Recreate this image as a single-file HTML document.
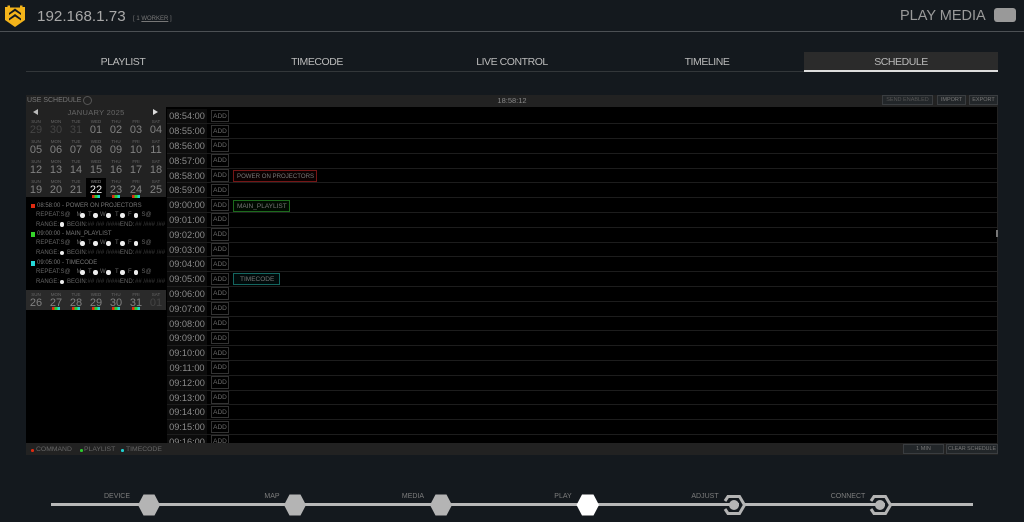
<!DOCTYPE html>
<html><head><meta charset="utf-8"><style>
html,body{margin:0;padding:0;width:1024px;height:522px;overflow:hidden;background:#14191e;font-family:"Liberation Sans",sans-serif;color:#999}
.a{position:absolute;white-space:nowrap;line-height:1}
.c{transform:translateX(-50%)}
.tab{position:absolute;top:56.5px;font-size:10.5px;letter-spacing:-.45px;color:#bbb;line-height:11px;transform:translateX(-50%)}
.btn{position:absolute;box-sizing:border-box;border:1px solid #3a3d40;background:#222629;color:#777;font-size:5.5px;text-align:center;line-height:8.5px}
.d{position:absolute;width:20px;text-align:center;color:#777}
.d b{display:block;font-weight:normal;font-size:4.5px;line-height:5px;color:#666}
.d i{display:block;font-style:normal;font-size:11px;line-height:11px;color:#808080;margin-top:1px}
.row{height:14.81px;position:relative;box-sizing:border-box;border-bottom:1px solid #1d1d1d}
.row s{text-decoration:none;position:absolute;left:0;top:0;width:40px;height:13.8px;background:#0c0c0c;color:#8a8a8a;font-size:9.2px;line-height:15px;text-align:center}
.row u{text-decoration:none;position:absolute;left:44px;top:.5px;width:16px;height:10.5px;border:1px solid #333;color:#6c6c6c;font-size:6.5px;line-height:11px;text-align:center;background:#000}
.ev{position:absolute;box-sizing:border-box;left:233px;height:12px;font-size:6.5px;line-height:11.5px;color:#777;padding-left:3px;white-space:nowrap}
.t{font-size:6px;color:#777;left:37px}
.s{font-size:6px;color:#666}
.k{font-size:6px;color:#3f3f3f}
.sq{position:absolute;width:4.5px;height:4.5px;left:30.5px}
.dots{position:absolute;height:3px;width:8px;background:linear-gradient(90deg,#e02a10 0 33%,#2ecb2e 33% 66%,#1fd0d0 66%)}
.w{position:absolute;width:4.5px;height:4.5px;border-radius:50%;background:#eee}
.lb{position:absolute;top:492.5px;font-size:7px;color:#7d7d7d;line-height:8px;transform:translateX(-50%)}
</style></head><body>
<svg class="a" style="left:4px;top:4px" width="22" height="24" viewBox="0 0 22 24"><path d="M1 4V3H3.500V1.500H6V3.500H16V1.500H18.500V3H21V16L11 23L1 16Z" fill="#f4b41a"/><path d="M5 9L11 4.500L17 9V11L11 7L5 11ZM5 14.500L11 10L17 14.500V16.500L11 12.500L5 16.500Z" fill="#14191e"/></svg>
<div class="a" style="left:37px;top:9px;font-size:15.200px;color:#a8a8a8">192.168.1.73</div>
<div class="a" style="left:133px;top:16px;font-size:6px;color:#777">[ 1 <span style="text-decoration:underline">WORKER</span> ]</div>
<div class="a" style="left:900px;top:8.500px;font-size:14.500px;color:#9a9a9a">PLAY MEDIA</div>
<div class="a" style="left:994px;top:8px;width:22px;height:14px;background:#999;border-radius:3px"></div>
<div class="a" style="left:0;top:31px;width:1024px;height:1px;background:#4c5054"></div>

<div class="a" style="left:804px;top:52px;width:194px;height:18px;background:#2b2b2b"></div>
<div class="a" style="left:26px;top:71px;width:972px;height:1px;background:#33373a"></div>
<div class="a" style="left:804px;top:70px;width:194px;height:1.500px;background:#ddd"></div>
<div class="tab" style="left:123px">PLAYLIST</div>
<div class="tab" style="left:317px">TIMECODE</div>
<div class="tab" style="left:512px">LIVE CONTROL</div>
<div class="tab" style="left:707px">TIMELINE</div>
<div class="tab" style="left:901px">SCHEDULE</div>

<div class="a" style="left:26px;top:95px;width:972px;height:360px;background:#222"></div>
<div class="a" style="left:26px;top:197px;width:140px;height:246px;background:#000"></div>
<div class="a" style="left:166px;top:107px;width:830.500px;height:336px;background:#000"></div>

<div class="a" style="left:27px;top:96.500px;font-size:7px;color:#777">USE SCHEDULE</div>
<div class="a" style="left:82.500px;top:96px;width:7px;height:7px;border:1px solid #555;border-radius:50%"></div>
<div class="a c" style="left:512px;top:96.500px;font-size:7.500px;color:#888">18:58:12</div>
<div class="btn" style="left:882px;top:95px;width:51px;height:10px;color:#555">SEND ENABLED</div>
<div class="btn" style="left:937px;top:95px;width:29px;height:10px">IMPORT</div>
<div class="btn" style="left:969px;top:95px;width:29px;height:10px">EXPORT</div>

<div class="a" style="left:33px;top:109px;width:0;height:0;border:3px solid transparent;border-right:5px solid #bbb;border-left:0"></div>
<div class="a" style="left:153px;top:109px;width:0;height:0;border:3px solid transparent;border-left:5px solid #ddd;border-right:0"></div>
<div class="a c" style="left:96px;top:108.500px;font-size:7.500px;color:#666;letter-spacing:.3px">JANUARY 2025</div>

<div class="d" style="left:26px;top:119px"><b>SUN</b><i style="color:#444">29</i></div>
<div class="d" style="left:46px;top:119px"><b>MON</b><i style="color:#444">30</i></div>
<div class="d" style="left:66px;top:119px"><b>TUE</b><i style="color:#444">31</i></div>
<div class="d" style="left:86px;top:119px"><b>WED</b><i>01</i></div>
<div class="d" style="left:106px;top:119px"><b>THU</b><i>02</i></div>
<div class="d" style="left:126px;top:119px"><b>FRI</b><i>03</i></div>
<div class="d" style="left:146px;top:119px"><b>SAT</b><i>04</i></div>

<div class="d" style="left:26px;top:139px"><b>SUN</b><i>05</i></div>
<div class="d" style="left:46px;top:139px"><b>MON</b><i>06</i></div>
<div class="d" style="left:66px;top:139px"><b>TUE</b><i>07</i></div>
<div class="d" style="left:86px;top:139px"><b>WED</b><i>08</i></div>
<div class="d" style="left:106px;top:139px"><b>THU</b><i>09</i></div>
<div class="d" style="left:126px;top:139px"><b>FRI</b><i>10</i></div>
<div class="d" style="left:146px;top:139px"><b>SAT</b><i>11</i></div>

<div class="d" style="left:26px;top:159px"><b>SUN</b><i>12</i></div>
<div class="d" style="left:46px;top:159px"><b>MON</b><i>13</i></div>
<div class="d" style="left:66px;top:159px"><b>TUE</b><i>14</i></div>
<div class="d" style="left:86px;top:159px"><b>WED</b><i>15</i></div>
<div class="d" style="left:106px;top:159px"><b>THU</b><i>16</i></div>
<div class="d" style="left:126px;top:159px"><b>FRI</b><i>17</i></div>
<div class="d" style="left:146px;top:159px"><b>SAT</b><i>18</i></div>

<div class="a" style="left:86px;top:178px;width:20px;height:20px;background:#000"></div>
<div class="d" style="left:26px;top:179px"><b>SUN</b><i>19</i></div>
<div class="d" style="left:46px;top:179px"><b>MON</b><i>20</i></div>
<div class="d" style="left:66px;top:179px"><b>TUE</b><i>21</i></div>
<div class="d" style="left:86px;top:179px"><b style="color:#888">WED</b><i style="color:#eee">22</i></div>
<div class="d" style="left:106px;top:179px"><b>THU</b><i>23</i></div>
<div class="d" style="left:126px;top:179px"><b>FRI</b><i>24</i></div>
<div class="d" style="left:146px;top:179px"><b>SAT</b><i>25</i></div>
<div class="dots" style="left:92px;top:195px"></div>
<div class="dots" style="left:112px;top:195px"></div>
<div class="dots" style="left:132px;top:195px"></div>

<div class="sq" style="top:203.500px;background:#e02a10"></div>
<div class="a t" style="top:202.700px">08:58:00 - POWER ON PROJECTORS</div>
<div class="a s" style="left:36px;top:212px">REPEAT:</div><div class="a s" style="left:60.500px;top:212px">S@</div><div class="a s" style="left:76.500px;top:212px">M</div><div class="w" style="left:80px;top:213px"></div><div class="a s" style="left:88px;top:212px">T</div><div class="w" style="left:93px;top:213px"></div><div class="a s" style="left:100px;top:212px">W</div><div class="w" style="left:106px;top:213px"></div><div class="a s" style="left:115px;top:212px">T</div><div class="w" style="left:120px;top:213px"></div><div class="a s" style="left:128px;top:212px">F</div><div class="w" style="left:133.500px;top:213px"></div><div class="a s" style="left:141.500px;top:212px">S@</div>
<div class="a s" style="left:36px;top:221.500px">RANGE:</div><div class="w" style="left:59.500px;top:222px"></div><div class="a s" style="left:67px;top:221.500px">BEGIN:</div><div class="a k" style="left:87.500px;top:221.500px">## /## /####</div><div class="a s" style="left:120px;top:221.500px">END:</div><div class="a k" style="left:135px;top:221.500px">## /### /##</div>

<div class="sq" style="top:232.300px;background:#35d52a"></div>
<div class="a t" style="top:231.300px">09:00:00 - MAIN_PLAYLIST</div>
<div class="a s" style="left:36px;top:240px">REPEAT:</div><div class="a s" style="left:60.500px;top:240px">S@</div><div class="a s" style="left:76.500px;top:240px">M</div><div class="w" style="left:80px;top:241px"></div><div class="a s" style="left:88px;top:240px">T</div><div class="w" style="left:93px;top:241px"></div><div class="a s" style="left:100px;top:240px">W</div><div class="w" style="left:106px;top:241px"></div><div class="a s" style="left:115px;top:240px">T</div><div class="w" style="left:120px;top:241px"></div><div class="a s" style="left:128px;top:240px">F</div><div class="w" style="left:133.500px;top:241px"></div><div class="a s" style="left:141.500px;top:240px">S@</div>
<div class="a s" style="left:36px;top:249.700px">RANGE:</div><div class="w" style="left:59.500px;top:250.500px"></div><div class="a s" style="left:67px;top:249.700px">BEGIN:</div><div class="a k" style="left:87.500px;top:249.700px">## /## /####</div><div class="a s" style="left:120px;top:249.700px">END:</div><div class="a k" style="left:135px;top:249.700px">## /### /##</div>

<div class="sq" style="top:261px;background:#25d8d8"></div>
<div class="a t" style="top:260.300px">09:05:00 - TIMECODE</div>
<div class="a s" style="left:36px;top:269.300px">REPEAT:</div><div class="a s" style="left:60.500px;top:269.300px">S@</div><div class="a s" style="left:76.500px;top:269.300px">M</div><div class="w" style="left:80px;top:270px"></div><div class="a s" style="left:88px;top:269.300px">T</div><div class="w" style="left:93px;top:270px"></div><div class="a s" style="left:100px;top:269.300px">W</div><div class="w" style="left:106px;top:270px"></div><div class="a s" style="left:115px;top:269.300px">T</div><div class="w" style="left:120px;top:270px"></div><div class="a s" style="left:128px;top:269.300px">F</div><div class="w" style="left:133.500px;top:270px"></div><div class="a s" style="left:141.500px;top:269.300px">S@</div>
<div class="a s" style="left:36px;top:278.700px">RANGE:</div><div class="w" style="left:59.500px;top:279.500px"></div><div class="a s" style="left:67px;top:278.700px">BEGIN:</div><div class="a k" style="left:87.500px;top:278.700px">## /## /####</div><div class="a s" style="left:120px;top:278.700px">END:</div><div class="a k" style="left:135px;top:278.700px">## /### /##</div>

<div class="a" style="left:26px;top:290px;width:140px;height:20px;background:#2a2a2a"></div>
<div class="d" style="left:26px;top:291.500px"><b>SUN</b><i>26</i></div>
<div class="d" style="left:46px;top:291.500px"><b>MON</b><i>27</i></div>
<div class="d" style="left:66px;top:291.500px"><b>TUE</b><i>28</i></div>
<div class="d" style="left:86px;top:291.500px"><b>WED</b><i>29</i></div>
<div class="d" style="left:106px;top:291.500px"><b>THU</b><i>30</i></div>
<div class="d" style="left:126px;top:291.500px"><b>FRI</b><i>31</i></div>
<div class="d" style="left:146px;top:291.500px"><b>SAT</b><i style="color:#444">01</i></div>
<div class="dots" style="left:52px;top:307px"></div>
<div class="dots" style="left:72px;top:307px"></div>
<div class="dots" style="left:92px;top:307px"></div>
<div class="dots" style="left:112px;top:307px"></div>
<div class="dots" style="left:132px;top:307px"></div>

<div class="a" style="left:167px;top:109.400px;width:829.500px;height:333.600px;overflow:hidden;white-space:normal">
<div class="row"><s>08:54:00</s><u>ADD</u></div>
<div class="row"><s>08:55:00</s><u>ADD</u></div>
<div class="row"><s>08:56:00</s><u>ADD</u></div>
<div class="row"><s>08:57:00</s><u>ADD</u></div>
<div class="row"><s>08:58:00</s><u>ADD</u></div>
<div class="row"><s>08:59:00</s><u>ADD</u></div>
<div class="row"><s>09:00:00</s><u>ADD</u></div>
<div class="row"><s>09:01:00</s><u>ADD</u></div>
<div class="row"><s>09:02:00</s><u>ADD</u></div>
<div class="row"><s>09:03:00</s><u>ADD</u></div>
<div class="row"><s>09:04:00</s><u>ADD</u></div>
<div class="row"><s>09:05:00</s><u>ADD</u></div>
<div class="row"><s>09:06:00</s><u>ADD</u></div>
<div class="row"><s>09:07:00</s><u>ADD</u></div>
<div class="row"><s>09:08:00</s><u>ADD</u></div>
<div class="row"><s>09:09:00</s><u>ADD</u></div>
<div class="row"><s>09:10:00</s><u>ADD</u></div>
<div class="row"><s>09:11:00</s><u>ADD</u></div>
<div class="row"><s>09:12:00</s><u>ADD</u></div>
<div class="row"><s>09:13:00</s><u>ADD</u></div>
<div class="row"><s>09:14:00</s><u>ADD</u></div>
<div class="row"><s>09:15:00</s><u>ADD</u></div>
<div class="row"><s>09:16:00</s><u>ADD</u></div>
</div>
<div class="ev" style="top:170px;width:84px;border:1px solid #751616;background:#0a0000;font-size:6.100px">POWER ON PROJECTORS</div>
<div class="ev" style="top:199.500px;width:57px;border:1px solid #1c6a1c;background:#000a00">MAIN_PLAYLIST</div>
<div class="ev" style="top:273px;width:47px;border:1px solid #146660;background:#000a0a;padding-left:6px">TIMECODE</div>
<div class="a" style="left:996px;top:230px;width:2px;height:7px;background:#777"></div>

<div class="a" style="left:31px;top:449px;width:2.500px;height:2.500px;border-radius:50%;background:#e02a10"></div>
<div class="a" style="left:36px;top:446.500px;font-size:6.800px;color:#666">COMMAND</div>
<div class="a" style="left:80px;top:449px;width:2.500px;height:2.500px;border-radius:50%;background:#2ecb2e"></div>
<div class="a" style="left:84px;top:446.500px;font-size:6.800px;color:#666">PLAYLIST</div>
<div class="a" style="left:121px;top:449px;width:2.500px;height:2.500px;border-radius:50%;background:#1fd0d0"></div>
<div class="a" style="left:126px;top:446.500px;font-size:6.800px;color:#666">TIMECODE</div>
<div class="btn" style="left:903px;top:444px;width:41px;height:10px">1 MIN</div>
<div class="btn" style="left:946px;top:444px;width:52px;height:10px;font-size:5.300px">CLEAR SCHEDULE</div>

<div class="lb" style="left:117px">DEVICE</div>
<div class="lb" style="left:272px">MAP</div>
<div class="lb" style="left:413px">MEDIA</div>
<div class="lb" style="left:563px">PLAY</div>
<div class="lb" style="left:705px">ADJUST</div>
<div class="lb" style="left:848px">CONNECT</div>
<svg class="a" style="left:0;top:490px" width="1024" height="32" viewBox="0 490 1024 32">
<rect x="51" y="503" width="922" height="3" fill="#b8b8b8"/>
<path d="M138 505L143.500 494.500H154.500L160 505L154.500 515.500H143.500Z" fill="#b4b4b4"/>
<path d="M284 505L289.500 494.500H300.500L306 505L300.500 515.500H289.500Z" fill="#b4b4b4"/>
<path d="M430 505L435.500 494.500H446.500L452 505L446.500 515.500H435.500Z" fill="#b4b4b4"/>
<path d="M576.500 505L582 494.500H593.500L599 505L593.500 515.500H582Z" fill="#fff"/>
<rect x="723" y="500" width="5" height="10" fill="#14191e"/>
<rect x="723" y="503" width="6" height="3" fill="#b8b8b8"/>
<rect x="739" y="500" width="4" height="10" fill="#14191e"/>
<path d="M725 501L728 496.500H739.500L744.500 505L739.500 513.500H728L725 509" fill="none" stroke="#b4b4b4" stroke-width="3"/>
<circle cx="734" cy="505" r="5" fill="#b4b4b4"/>
<rect x="869" y="500" width="5" height="10" fill="#14191e"/>
<rect x="869" y="503" width="6" height="3" fill="#b8b8b8"/>
<rect x="885" y="500" width="4" height="10" fill="#14191e"/>
<path d="M871 501L874 496.500H885.500L890.500 505L885.500 513.500H874L871 509" fill="none" stroke="#b4b4b4" stroke-width="3"/>
<circle cx="880" cy="505" r="5" fill="#b4b4b4"/>
</svg>
</body></html>
